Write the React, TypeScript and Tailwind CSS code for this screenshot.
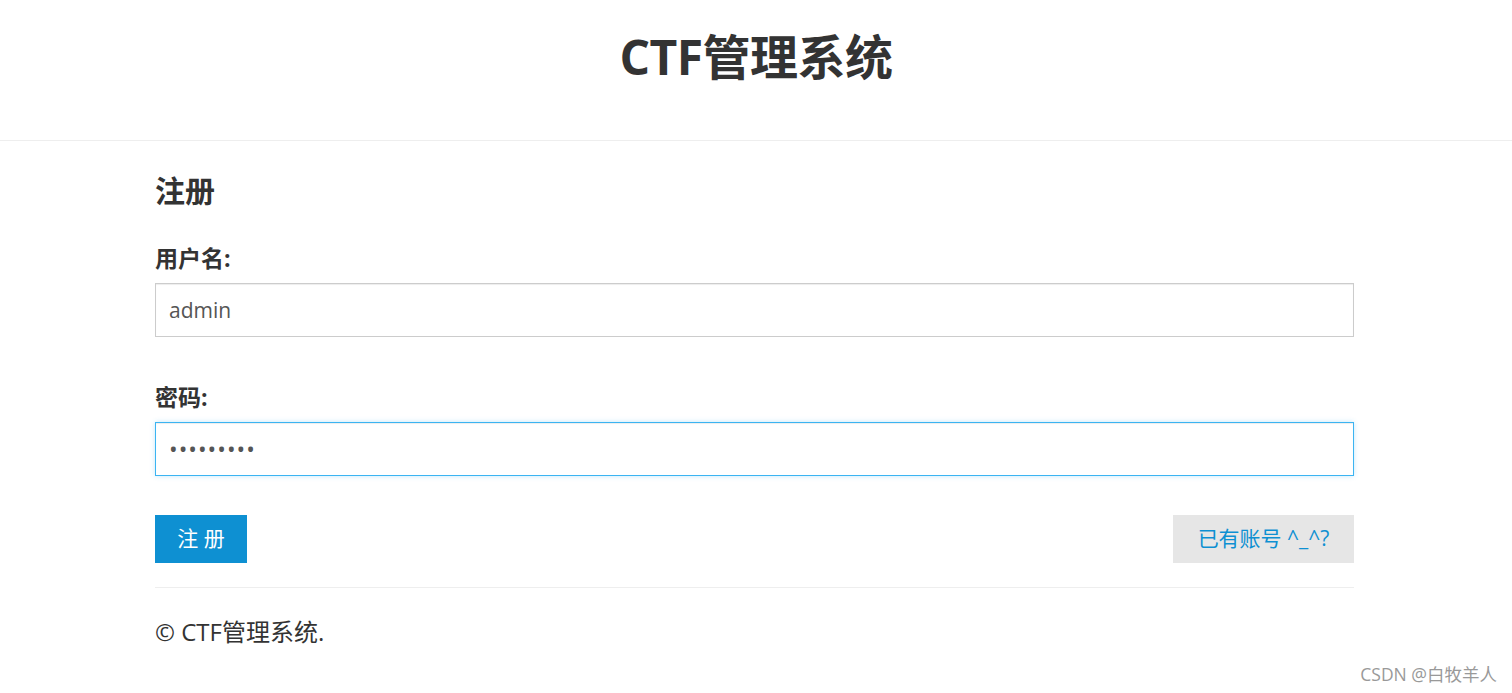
import React from "react";

const font = { fontFamily: '"Open Sans", "Noto Sans CJK SC", sans-serif' };

export default function App() {
  return (
    <div className="relative min-h-[693px] bg-white text-[#333]" style={font}>
      <header className="h-[141px] border-b border-[#eee] flex items-center justify-center">
        <h1 className="text-[48px] font-bold leading-none mt-[-26px] tracking-[-0.5px] text-[#333]">CTF管理系统</h1>
      </header>
      <main className="w-[1199px] ml-[155px]">
        <h2 className="mt-[30px] text-[30px] leading-[40px] font-bold">注册</h2>
        <form onSubmit={(e) => e.preventDefault()}>
          <label className="block mt-[32px] text-[23px] leading-[30px] font-bold">用户名:</label>
          <input
            type="text"
            defaultValue="admin"
            className="block mt-[10px] w-full h-[54px] border border-[#ccc] px-[13px] text-[21px] text-[#555] outline-none shadow-[inset_0_1px_1px_rgba(0,0,0,0.075)]"
            style={font}
          />
          <label className="block mt-[45px] text-[23px] leading-[30px] font-bold">密码:</label>
          <input
            type="password"
            defaultValue="123456789"
            className="block mt-[10px] w-full h-[54px] border border-[#3bb4f2] px-[13px] text-[23px] tracking-[1px] text-[#555] outline-none shadow-[inset_0_1px_1px_rgba(0,0,0,0.075),0_0_5px_rgba(59,180,242,0.3)]"
            style={font}
          />
          <div className="mt-[39px] flex justify-between">
            <button
              type="submit"
              className="h-[48px] w-[92px] bg-[#0e90d2] text-white text-[21px]"
              style={font}
            >
              注 册
            </button>
            <button
              type="button"
              className="h-[48px] w-[181px] bg-[#e6e6e6] text-[#0e90d2] text-[21px]"
              style={font}
            >
              已有账号 ^_^?
            </button>
          </div>
        </form>
        <hr className="mt-[24px] border-0 border-t border-[#eee]" />
        <footer className="mt-[29px] text-[24px] leading-[30px]">© CTF管理系统.</footer>
      </main>
      <div className="absolute right-[15px] bottom-[6px] text-[17.5px] text-[#999]" style={font}>
        CSDN @白牧羊人
      </div>
    </div>
  );
}
